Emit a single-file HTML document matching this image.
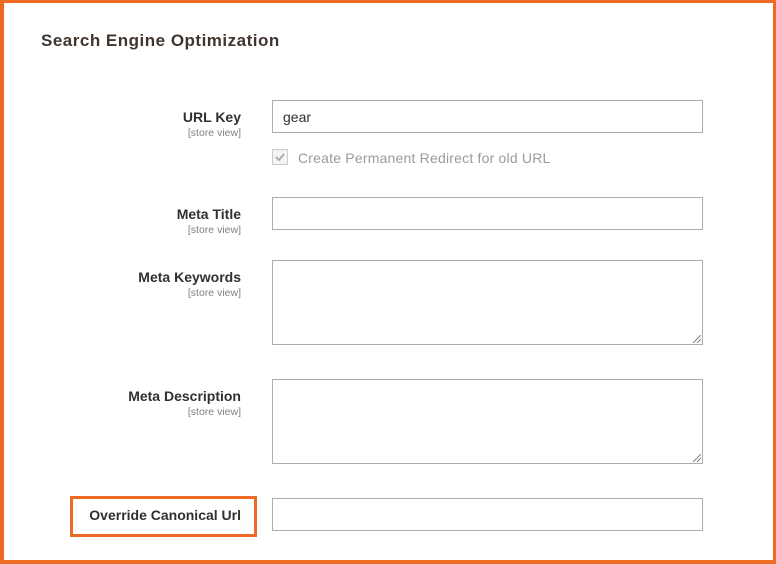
<!DOCTYPE html>
<html><head><style>
*{margin:0;padding:0;box-sizing:border-box}
body{width:776px;height:564px;background:#fff;position:relative;overflow:hidden;font-family:"Liberation Sans",sans-serif;color:#303030}
.frame{position:absolute;left:0;top:0;width:776px;height:564px;border:solid #ef6a23;border-width:3px 3px 4px 4px}
h2{position:absolute;left:41px;top:31px;font-size:17px;font-weight:bold;color:#41362f;letter-spacing:.5px}
.lbl{position:absolute;right:535px;text-align:right;font-size:14px;font-weight:bold;color:#303030;white-space:nowrap}
.sv{display:block;font-size:10.5px;font-weight:normal;color:#808080;margin-top:2px}
.in{position:absolute;left:272px;width:431px;border:1px solid #adadad;background:#fff}
.in span{position:absolute;left:10px;top:8px;font-size:14px;color:#303030}
.grip{position:absolute;right:1px;bottom:1px;width:8px;height:8px;background:linear-gradient(135deg,transparent 45%,#888 45%,#888 55%,transparent 55%,transparent 70%,#888 70%,#888 80%,transparent 80%)}
.cb{position:absolute;left:272px;top:149px;width:16px;height:16px;border:1px solid #ccc;background:#f4f4f4}
.ob{position:absolute;left:70px;top:496px;width:187px;height:41px;border:3px solid #ef6a23}
</style></head><body>
<div class="frame"></div>
<h2>Search Engine Optimization</h2>
<div class="lbl" style="top:109px">URL Key<span class="sv">[store view]</span></div>
<div class="in" style="top:100px;height:33px"><span>gear</span></div>
<div class="cb"><svg width="14" height="14" viewBox="0 0 14 14"><path d="M3 7l3 3 5-6" fill="none" stroke="#aaa" stroke-width="1.8"/></svg></div>
<div style="position:absolute;left:298px;top:150px;font-size:14px;color:#9a9a9a;letter-spacing:.2px">Create Permanent Redirect for old URL</div>
<div class="lbl" style="top:206px">Meta Title<span class="sv">[store view]</span></div>
<div class="in" style="top:197px;height:33px"></div>
<div class="lbl" style="top:269px">Meta Keywords<span class="sv">[store view]</span></div>
<div class="in" style="top:260px;height:85px"><div class="grip"></div></div>
<div class="lbl" style="top:388px">Meta Description<span class="sv">[store view]</span></div>
<div class="in" style="top:379px;height:85px"><div class="grip"></div></div>
<div class="ob"></div>
<div class="lbl" style="top:507px">Override Canonical Url</div>
<div class="in" style="top:498px;height:33px"></div>
</body></html>
